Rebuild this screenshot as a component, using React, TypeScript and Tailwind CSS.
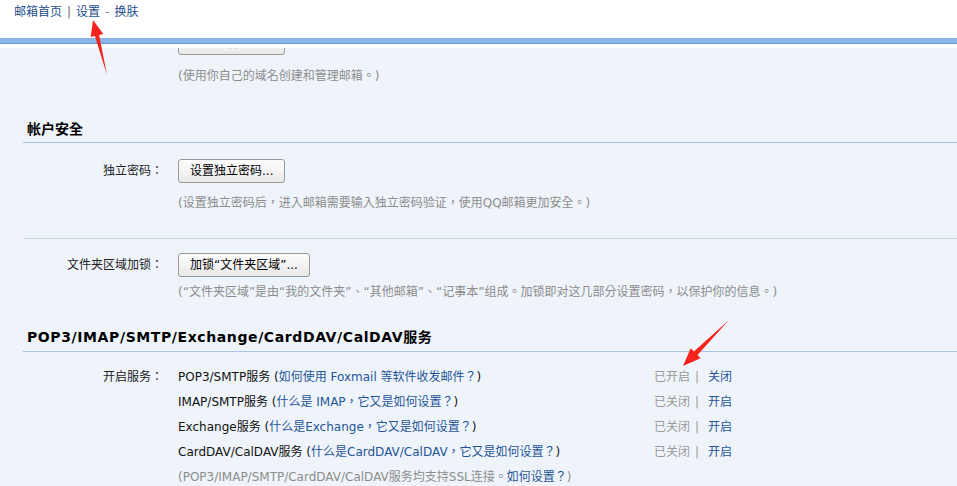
import React from 'react';

const font = { fontFamily: '"DejaVu Sans", "Noto Sans CJK TC", sans-serif' };

function Btn({ children }: { children: React.ReactNode }) {
  return (
    <button className="h-[24px] px-[11px] rounded-[3px] border border-[#9a9a9a] bg-gradient-to-b from-[#fdfdfd] to-[#e9e9e9] text-[12px] text-black leading-[22px] whitespace-nowrap">
      {children}
    </button>
  );
}

function Row({ label, children }: { label?: string; children: React.ReactNode }) {
  return (
    <div className="flex items-center h-[24px]">
      <div className="w-[140px] shrink-0 text-right text-[12px] text-[#222] leading-[24px]">{label}</div>
      <div className="pl-[15px] flex items-center">{children}</div>
    </div>
  );
}

function Help({ children, mt }: { children: React.ReactNode; mt: string }) {
  return <div className={`pl-[155px] h-[18px] text-[12px] leading-[18px] text-[#8c8c8c] whitespace-nowrap ${mt}`}>{children}</div>;
}

const services = [
  { name: 'POP3/SMTP服务', help: '如何使用 Foxmail 等软件收发邮件？', on: true },
  { name: 'IMAP/SMTP服务', help: '什么是 IMAP，它又是如何设置？', on: false },
  { name: 'Exchange服务', help: '什么是Exchange，它又是如何设置？', on: false },
  { name: 'CardDAV/CalDAV服务', help: '什么是CardDAV/CalDAV，它又是如何设置？', on: false },
];

export default function App() {
  return (
    <div className="relative w-[957px] h-[486px] overflow-hidden flex flex-col bg-white" style={font}>
      {/* top nav */}
      <div className="h-[38px] shrink-0 pl-[14px] pt-[3px] text-[12px] leading-[18px] text-[#1e4e8c] whitespace-nowrap">
        <span>邮箱首页</span>
        <span className="text-[#6e6e6e] mx-[5px]">|</span>
        <span>设置</span>
        <span className="text-[#8a8a8a] mx-[5px]">-</span>
        <span>换肤</span>
      </div>
      <div className="h-[6px] shrink-0 bg-[#8ab4e8] border-b border-[#6b96cf]" />
      <div className="h-[4px] shrink-0 bg-white" />

      <div className="flex-1 bg-[#eff4fb] overflow-hidden">
        <div className="mt-[-17px] pl-[23px]">
          {/* scrolled-off row, only the bottom of its button is visible */}
          <Row>
            <Btn>创建域名邮箱...</Btn>
          </Row>
          <Help mt="mt-[12px]">(使用你自己的域名创建和管理邮箱。)</Help>

          <div className="mt-[34px] h-[24px] border-b border-[#a9c5e8] pl-[4px] text-[14px] font-bold leading-[20px] text-black whitespace-nowrap">
            帐户安全
          </div>

          <div className="mt-[16px]">
            <Row label="独立密码：">
              <Btn>设置独立密码...</Btn>
            </Row>
          </div>
          <Help mt="mt-[11px]">(设置独立密码后，进入邮箱需要输入独立密码验证，使用QQ邮箱更加安全。)</Help>

          <div className="mt-[26px] h-0 border-b border-[#cfd9e6]" />

          <div className="mt-[14px]">
            <Row label="文件夹区域加锁：">
              <Btn>加锁“文件夹区域”...</Btn>
            </Row>
          </div>
          <Help mt="mt-[6px]">
            (“文件夹区域”是由“我的文件夹”、“其他邮箱”、“记事本”组成。加锁即对这几部分设置密码，以保护你的信息。)
          </Help>

          <div className="mt-[26px] h-[25px] border-b border-[#a9c5e8] pl-[4px] text-[14px] font-bold leading-[20px] tracking-[0.6px] text-black whitespace-nowrap">
            POP3/IMAP/SMTP/Exchange/CardDAV/CalDAV服务
          </div>

          <div className="mt-[13px] flex">
            <div className="w-[140px] shrink-0 text-right text-[12px] text-[#222] leading-[25px]">开启服务：</div>
            <div className="pl-[15px] flex-1 text-[12px] leading-[25px] whitespace-nowrap">
              {services.map(s => (
                <div key={s.name} className="flex h-[25px]">
                  <div className="w-[476px] shrink-0 text-[#111]">
                    {s.name} (<span className="text-[#1f5597]">{s.help}</span>)
                  </div>
                  <div>
                    <span className="text-[#9a9a9a]">{s.on ? '已开启' : '已关闭'}</span>
                    <span className="text-[#9a9a9a] ml-[5px] mr-[9px]">|</span>
                    <span className="text-[#1f5597]">{s.on ? '关闭' : '开启'}</span>
                  </div>
                </div>
              ))}
              <div className="h-[25px] text-[#8c8c8c]">
                (POP3/IMAP/SMTP/CardDAV/CalDAV服务均支持SSL连接。<span className="text-[#1f5597]">如何设置？</span>)
              </div>
            </div>
          </div>
        </div>
      </div>

      {/* annotation arrows */}
      <svg className="absolute left-0 top-0 pointer-events-none" width="957" height="486">
        <polygon points="93,20 103.3,33.9 99.1,35 107,75 94.9,36 90.7,37.1" fill="#f4231b" />
        <polygon points="683,366 690.7,348.3 693.9,351.5 729,320 697.5,355.1 700.6,358.2" fill="#f4231b" />
      </svg>
    </div>
  );
}
